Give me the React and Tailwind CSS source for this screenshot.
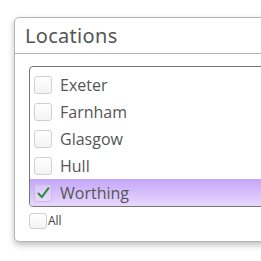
export default function App() {
  const items = ["Exeter", "Farnham", "Glasgow", "Hull", "Worthing"]
  return (
    <div className="w-[261px] h-[261px] overflow-hidden bg-white relative" style={{ fontFamily: '"Open Sans", sans-serif' }}>
      <div className="absolute left-[14px] top-[17px] w-[300px] h-[225px] bg-white border border-[#b5b5b5] rounded-tl-[5px] rounded-bl-[5px] shadow-[0_3px_6px_rgba(0,0,0,0.25)]">
        <div className="h-[36px] border-b border-[#b5b5b5] pl-[10px] flex items-center">
          <span className="text-[20px] text-[#555] tracking-[0.3px]" style={{ fontFamily: '"Noto Sans", sans-serif' }}>Locations</span>
        </div>
        <div className="pl-[14px] pt-[12px]">
          <div className="border border-[#777] rounded-tl-[4px] rounded-bl-[4px] pt-[4px] overflow-hidden">
            {items.map((item) => {
              const checked = item === "Worthing"
              return (
                <div
                  key={item}
                  className={`h-[27px] flex items-center pl-[4px] ${checked ? "bg-gradient-to-b from-[#c4a6f8] to-[#e8d8fd]" : ""}`}
                >
                  <div
                    className={`w-[18px] h-[18px] rounded-[3px] border flex items-center justify-center ${checked ? "border-[#c9b8e8] bg-white/25" : "border-[#d0d0d0] bg-gradient-to-b from-white to-[#f3f3f3]"}`}
                  >
                    {checked && (
                      <svg width="13" height="12" viewBox="0 0 13 12">
                        <path d="M1.5 6.5 L4.8 10.2 L11.5 1.2" fill="none" stroke="#2f8a3a" strokeWidth="2" strokeLinecap="round" strokeLinejoin="round" />
                      </svg>
                    )}
                  </div>
                  <span className="ml-[8px] text-[16px] text-[#555]">{item}</span>
                </div>
              )
            })}
          </div>
          <div className="flex items-center mt-[5px]">
            <div className="w-[18px] h-[16px] rounded-[3px] border border-[#d0d0d0] bg-gradient-to-b from-white to-[#f3f3f3]"></div>
            <span className="text-[12px] text-[#444] ml-[1px]">All</span>
          </div>
        </div>
      </div>
    </div>
  )
}
